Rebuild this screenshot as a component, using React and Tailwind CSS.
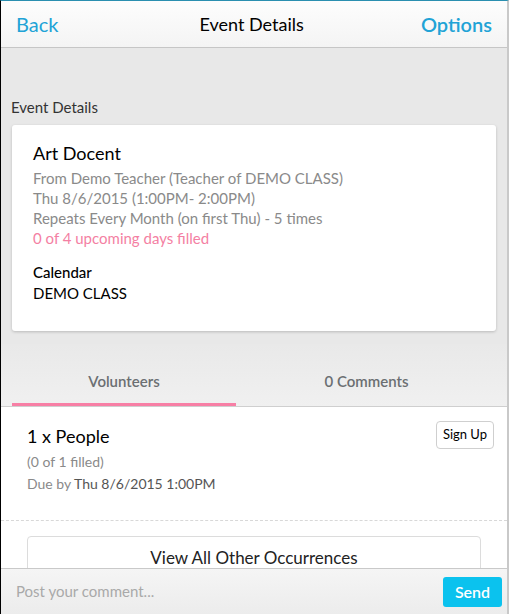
import React from 'react'

const font = { fontFamily: 'Lato, "Open Sans", sans-serif' }

export default function App() {
    return (
        <div style={font} className="w-[509px] h-[614px] flex flex-col overflow-hidden bg-white border-l border-black border-r-2 border-r-[#c9c9c9] border-t border-t-[#2a8fb0]">
            <header className="h-[47px] shrink-0 flex items-center justify-between px-[15px] bg-gradient-to-b from-[#fdfdfd] to-[#f4f4f4] border-b border-[#c6c6c6]">
                <span className="text-[20px] text-[#21a3d6]">Back</span>
                <span className="text-[18px] text-black pl-[24px]">Event Details</span>
                <span className="text-[20px] font-semibold text-[#21a3d6]">Options</span>
            </header>

            <div className="flex-1 overflow-hidden">
                <div className="bg-[#e8e8e8] pt-[49px]">
                    <p className="px-[10px] text-[15px] text-[#333] leading-[20px]">Event Details</p>
                    <div className="mx-[11px] mt-[8px] bg-white rounded-[3px] shadow-[0_1px_3px_rgba(0,0,0,0.2)] px-[21px] pt-[16px] pb-[27px]">
                        <h2 className="text-[18px] text-black leading-[24px]">Art Docent</h2>
                        <div className="mt-[3px] text-[15px] text-[#8a8a8a] leading-[20px]">
                            <p>From Demo Teacher (Teacher of DEMO CLASS)</p>
                            <p>Thu 8/6/2015 (1:00PM- 2:00PM)</p>
                            <p>Repeats Every Month (on first Thu) - 5 times</p>
                            <p className="text-[#f47fa3]">0 of 4 upcoming days filled</p>
                        </div>
                        <p className="mt-[14px] text-[15px] font-medium text-black leading-[21px]">Calendar</p>
                        <p className="text-[15px] text-black leading-[21px]">DEMO CLASS</p>
                    </div>
                    <div className="h-[13px]" />
                    <div className="bg-gradient-to-b from-[#e9e9e9] to-[#f0f0f0] border-b border-[#cfcfcf]">
                        <div className="h-[26px]" />
                        <div className="flex">
                            <div className="w-[224px] ml-[11px] text-center">
                                <span className="block text-[15px] font-semibold text-[#6b6f72] pb-[10px]">Volunteers</span>
                                <div className="h-[3px] bg-[#f77fa5]" />
                            </div>
                            <div className="flex-1 text-center text-[15px] font-semibold text-[#6b6f72] pr-[10px]">0 Comments</div>
                        </div>
                    </div>
                </div>

                <div className="flex justify-between pl-[26px] pr-[13px] pt-[17px] pb-[25px] border-b border-dashed border-[#d8d8d8]">
                    <div>
                        <p className="text-[18px] text-black leading-[24px]">1 x People</p>
                        <p className="mt-[3px] text-[14px] text-[#8a8a8a] leading-[22px]">(0 of 1 filled)</p>
                        <p className="text-[14px] text-[#8a8a8a] leading-[22px]">Due by <span className="text-[#555]">Thu 8/6/2015 1:00PM</span></p>
                    </div>
                    <button className="self-start -mt-[3px] h-[28px] px-[6px] text-[13px] text-black border border-[#cfcfcf] rounded-[4px] bg-white">Sign Up</button>
                </div>

                <div className="px-[26px] pt-[15px]">
                    <div className="h-[40px] border border-[#dcdcdc] rounded-[4px] text-center text-[17px] leading-[22px] text-[#222] pt-[10px]">View All Other Occurrences</div>
                </div>
            </div>

            <footer className="h-[46px] shrink-0 flex items-center justify-between pl-[15px] pr-[5px] bg-gradient-to-b from-[#f5f5f5] to-[#ececec] border-t border-[#c9c9c9]">
                <span className="text-[15px] text-[#a9a9a9]">Post your comment...</span>
                <button className="w-[59px] h-[30px] rounded-[3px] bg-[#0bc2ee] text-white text-[16px] font-semibold">Send</button>
            </footer>
        </div>
    )
}
